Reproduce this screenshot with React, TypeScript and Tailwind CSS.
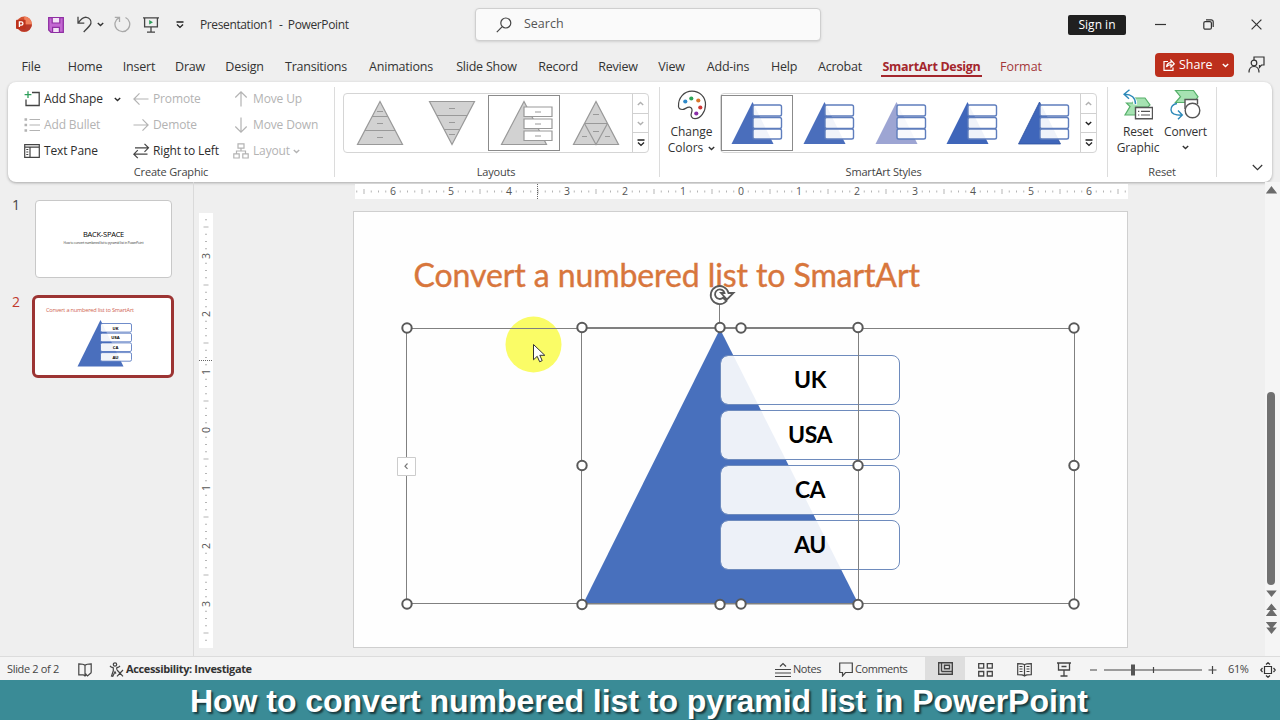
import type { ReactNode } from "react";
import clsx from "clsx";

/* ── Data ── */

const TABS = [
  { label: "File", width: "w-[46px]" },
  { label: "Home", width: "w-[62px]" },
  { label: "Insert", width: "w-[46px]" },
  { label: "Draw", width: "w-[56px]" },
  { label: "Design", width: "w-[53px]" },
  { label: "Transitions", width: "w-[90px]" },
  { label: "Animations", width: "w-[80px]" },
  { label: "Slide Show", width: "w-[91px]" },
  { label: "Record", width: "w-[52px]" },
  { label: "Review", width: "w-[68px]" },
  { label: "View", width: "w-[39px]" },
  { label: "Add-ins", width: "w-[74px]" },
  { label: "Help", width: "w-[38px]" },
  { label: "Acrobat", width: "w-[74px]" },
];

const COUNTRIES = [
  { name: "UK", top: "top-[143px]" },
  { name: "USA", top: "top-[198px]" },
  { name: "CA", top: "top-[253px]" },
  { name: "AU", top: "top-[308px]" },
];

const HANDLES = [
  [407, 328], [741, 328], [1074, 328], [1074, 465.5], [1074, 604], [741, 604], [407, 604],
  [582, 327.5], [720, 327.5], [858, 327.5], [858, 465.5], [858, 604.5], [720, 604.5], [582, 604.5], [582, 465.5],
];

/* ── Icons ── */

function Svg({ w, h, children, className }: { w: number; h: number; children: ReactNode; className?: string }) {
  return (
    <svg
      width={w}
      height={h}
      viewBox={`0 0 ${w} ${h}`}
      fill="none"
      stroke="currentColor"
      strokeWidth="1.2"
      className={clsx("block shrink-0", className)}
    >
      {children}
    </svg>
  );
}

function Chevron({ className }: { className?: string }) {
  return (
    <Svg w={7} h={5} className={className}>
      <path d="M.8 1 3.5 3.6 6.2 1" strokeWidth="1.4" />
    </Svg>
  );
}

function MoreIcon() {
  return (
    <Svg w={8} h={8} className="text-[#222]">
      <path d="M.5 1h7M1 3.6l3 2.8 3-2.8" strokeWidth="1.4" />
    </Svg>
  );
}

function PowerPointLogo() {
  return (
    <Svg w={16} h={17}>
      <circle cx="8.2" cy="8.3" r="7.7" fill="#d35230" stroke="none" />
      <path d="M8.2.6a7.7 7.7 0 0 1 7.7 7.7H8.2z" fill="#f0805c" stroke="none" />
      <path d="M.6 8.8h15.3a7.7 7.7 0 0 1-15.3 0z" fill="#b7382a" stroke="none" />
      <rect x="0" y="3.8" width="9.6" height="9.2" rx="1" fill="#bd321c" stroke="none" />
      <path d="M3.4 11V5.8h1.9a1.6 1.6 0 0 1 0 3.3H3.6" stroke="#fff" strokeWidth="1.3" />
    </Svg>
  );
}

function SaveIcon() {
  return (
    <Svg w={16} h={16}>
      <path d="M.7.7h14.6v14.6H3L.7 13z" fill="#c368d2" stroke="#8f2fa3" strokeWidth="1.3" />
      <path d="M4.2 1v5h7.6V1" fill="#f3e3f6" stroke="#8f2fa3" />
      <path d="M4.6 15v-4.6h6.8V15" fill="#f3e3f6" stroke="#8f2fa3" />
    </Svg>
  );
}

function UndoIcon() {
  return (
    <Svg w={16} h={17} className="text-[#444]">
      <path d="M1 .8v6.400h6.300M1.200 7C4 3 6.500 1 9.300 1.300c3.400.3 5.300 3.500 4.600 6.200-.5 2-3.500 4.800-7.200 8.500" strokeWidth="1.3" />
    </Svg>
  );
}

function RedoIcon() {
  return (
    <Svg w={17} h={17} className="text-[#a9a9a9]">
      <path d="M11.5 1.500A7.400 7.400 0 1 1 5 1.600M.8 1.300h4.700v4.700" strokeWidth="1.3" />
    </Svg>
  );
}

function ShowIcon() {
  return (
    <Svg w={16} h={16} className="text-[#444]">
      <path d="M0 .8h16M1.600 1v8.800h12.800V1M8 9.800v5M4 15.200h8" strokeWidth="1.3" />
      <path d="M6.200 3v4.600L10 5.300z" fill="#2e9e5b" stroke="none" />
    </Svg>
  );
}

function AddShapeIcon() {
  return (
    <Svg w={16} h={16} className="text-[#444]">
      <path d="M8 1.500h7.200v13H2V8.500" strokeWidth="1.3" />
      <path d="M4 .3v6.800M.6 3.700h6.800" stroke="#2e9e5b" strokeWidth="1.3" />
    </Svg>
  );
}

function BulletIcon() {
  return (
    <Svg w={16} h={16}>
      <path d="M5.500 2.500H16M5.500 8H16M5.500 13.500H16" />
      <path d="M.5 2.500h2.600M.5 8h2.600M.5 13.500h2.600" strokeWidth="2.6" />
    </Svg>
  );
}

function TextPaneIcon() {
  return (
    <Svg w={16} h={14} className="text-[#444]">
      <path d="M.7.7h14.600v12.600H.7zM.7 3.200h14.600M6 3.200v10M2.300 5.500h2M2.300 8h2M2.300 10.500h2" />
    </Svg>
  );
}

function ArrowIcon({ direction }: { direction: "left" | "right" | "up" | "down" }) {
  const rotation = { left: "", right: "rotate-180", up: "rotate-90", down: "-rotate-90" }[direction];
  return (
    <Svg w={16} h={14} className={rotation}>
      <path d="M.9 7h14.600M6.500 1.300.9 7l5.600 5.700" />
    </Svg>
  );
}

function SwapIcon() {
  return (
    <Svg w={17} h={16} className="text-[#444]">
      <path d="M2 4.800h13.500M11.500.8l4 4-4 4M14.500 11.200H.8M4.800 7.200l-4 4 4 4" />
    </Svg>
  );
}

function OrgIcon() {
  return (
    <Svg w={16} h={16}>
      <path d="M5 .8h6v4.400H5zM.8 10.800h5.400v4.200H.8zM9.800 10.800h5.400v4.200H9.800zM8 5.200V8M3.500 10.800V8h9v2.800" />
    </Svg>
  );
}

function PaletteIcon() {
  return (
    <Svg w={30} h={30} className="text-[#444]">
      <path
        d="M1.500 16.500C1 8 7 1.200 15 1.200c7.500 0 13.500 5.500 13.500 13.300 0 7.500-5 14.200-10.500 14.200-3.500 0-4.700-3-3.500-6 1.200-3 .4-5.200-1.800-5.500-3-.4-4.600 2.300-7.200 2.300-2.300 0-3.800-1.200-4-3z"
        fill="#fff"
      />
      <circle cx="8.300" cy="11.500" r="2.100" fill="#2f8ac9" stroke="none" />
      <circle cx="14.300" cy="8.500" r="2.100" fill="#2da657" stroke="none" />
      <circle cx="21.300" cy="10.500" r="2.100" fill="#d9772b" stroke="none" />
      <circle cx="23.300" cy="17.500" r="2.100" fill="#cf3636" stroke="none" />
      <circle cx="19.300" cy="23.500" r="2.100" fill="#8a2da8" stroke="none" />
    </Svg>
  );
}

function ResetIcon() {
  return (
    <Svg w={30} h={32} className="text-[#555]">
      <path d="M11 9h11l5 7-2 2H13v8H2l5-8.500L3.500 14H10z" fill="#a6e3b2" stroke="#57b06b" />
      <path d="M10 9c1.500 1.800 2.400 4 2.200 6.500" stroke="#fff" strokeWidth="4" />
      <path d="M12.500 15C12.500 8.500 8.500 5.200 1.500 5.300M6.500.8 1 5.300l5 4.500" stroke="#2b88b8" strokeWidth="1.4" />
      <path d="M12.500 18.500h17v11.300h-17z" fill="#fff" strokeWidth="1.4" />
      <path d="M15 22.300h1.300M15 26h1.300M18 22.300h9M18 26h9" />
    </Svg>
  );
}

function ConvertIcon() {
  return (
    <Svg w={31} h={31} className="text-[#555]">
      <path d="M5.500 1.500h18L28 7.800l-4 5.700H5.500l5-5.800z" fill="#a6e3b2" stroke="#57b06b" />
      <path d="M15 20V10.500h12.500V15" fill="#fff" strokeWidth="1.4" />
      <circle cx="22.500" cy="21.500" r="7.300" fill="#fff" strokeWidth="1.4" />
      <path d="M7 14.500C3 15 .8 18 1 21c.3 3.500 4 5.300 11 5.200M8 21.500l4.300 4.600L8 30.300" stroke="#2b88b8" strokeWidth="1.4" />
    </Svg>
  );
}

/* ── Gallery drawings ── */

function LayoutDrawing({ kind }: { kind: "basic" | "inverted" | "list" | "segmented" }) {
  return (
    <Svg w={50} h={50} className="overflow-visible text-[#999]">
      {kind === "basic" && (
        <path d="M25 3.500 47.500 46.500h-45zM17.500 18.500h15M10 32.500h30M22 13.500h6M22 25.500h6M22 39.500h6" fill="#d2d2d2" />
      )}
      {kind === "inverted" && (
        <path d="M25 46.500 47.500 3.500h-45zM10 17.500h30M17.500 31.500h15M22 10.500h6M22 24.500h6M22 36.500h6" fill="#d2d2d2" />
      )}
      {kind === "list" && (
        <>
          <path d="M25 3.500 47.500 46.500h-45z" fill="#d2d2d2" />
          <path d="M25 9h28v9.500H25zM25 21h28v9.500H25zM25 33h28v9.500H25z" fill="#fff" />
          <path d="M36 14h6M36 26h6M36 38h6" />
        </>
      )}
      {kind === "segmented" && (
        <>
          <path d="M25 3.500 47.500 46.500h-45z" fill="#d2d2d2" />
          <path d="M13.500 25.500h23M13.500 25.500 25 46.500l11.500-21M22 16.500h6M22 33.500h6M11 38.500h5M34 38.500h5" />
        </>
      )}
    </Svg>
  );
}

function StyleDrawing({ fill, dark = false }: { fill: string; dark?: boolean }) {
  return (
    <svg width="54" height="50" viewBox="1.500 0 54 50" className="block">
      <path d="M24 4 45 46H3z" fill={fill} stroke={dark ? "#2c50a0" : "none"} strokeWidth=".8" />
      {[7, 19.5, 31].map((y) => (
        <rect key={y} x="24.500" y={y} width="28.500" height={y === 31 ? 10 : 11} rx="1.800" fill="#fff" fillOpacity=".92" stroke="#5f7ebd" strokeWidth="1.400" />
      ))}
    </svg>
  );
}

function GalleryItem({ selected, children }: { selected?: boolean; children: ReactNode }) {
  return (
    <div className={clsx("mt-px flex h-[56px] w-[72px] items-center justify-center", selected && "border-[1.500px] border-[#8b8b8b]")}>
      {children}
    </div>
  );
}

function GalleryButtons({ canScroll }: { canScroll?: boolean }) {
  return (
    <div className="flex w-[16px] flex-col divide-y divide-[#d0d0d0] border-l border-[#d0d0d0]">
      <div className="flex flex-1 items-center justify-center"><Chevron className="rotate-180 text-[#b0b0b0]" /></div>
      <div className="flex flex-1 items-center justify-center">
        <Chevron className={canScroll ? "text-[#222]" : "text-[#b0b0b0]"} />
      </div>
      <div className="flex flex-1 items-center justify-center"><MoreIcon /></div>
    </div>
  );
}

/* ── Title bar and tabs ── */

function TitleBar() {
  return (
    <header className="flex h-12 items-center pt-px pl-4 text-[#333]">
      <PowerPointLogo />
      <div className="ml-4"><SaveIcon /></div>
      <div className="ml-[13px]"><UndoIcon /></div>
      <Chevron className="ml-[4px]" />
      <div className="ml-[10px]"><RedoIcon /></div>
      <div className="ml-[12px]"><ShowIcon /></div>
      <div className="ml-[17px]"><MoreIcon /></div>
      <span className="ml-4 w-[275px] whitespace-pre text-[12px] tracking-[-0.380px]">Presentation1  -  PowerPoint</span>
      <div className="flex h-[33px] w-[346px] items-center rounded-[4px] border border-[#cfcfcf] bg-[#fafafa] pl-[20px] shadow-sm">
        <Svg w={16} h={16} className="text-[#444]">
          <circle cx="9.800" cy="6" r="5" />
          <path d="M6 9.800.8 15.200" />
        </Svg>
        <span className="ml-[12px] text-[12.500px] text-[#555]">Search</span>
      </div>
      <button className="ml-[247px] h-5 w-[58px] rounded-[2px] bg-[#202020] text-[12px] leading-5 text-white">Sign in</button>
      <Svg w={11} h={11} className="ml-[29px]"><path d="M0 5.500h11" /></Svg>
      <Svg w={11} h={11} className="ml-[37px]">
        <rect x=".8" y="2.600" width="7.600" height="7.600" rx="1.500" />
        <path d="M3 .8h5.200a2 2 0 0 1 2 2V8" />
      </Svg>
      <Svg w={11} h={11} className="ml-[37px]"><path d="m.6.6 9.800 9.800M10.400.6.600 10.400" /></Svg>
    </header>
  );
}

function TabRow() {
  return (
    <nav className="flex h-[34px] items-center text-[12.500px] text-[#333]">
      <div className="flex h-full flex-1 items-center pt-[4px]">
        <div className="flex pl-2">
          {TABS.map((tab) => (
            <span key={tab.label} className={clsx("text-center tracking-[-0.220px] whitespace-nowrap", tab.width)}>{tab.label}</span>
          ))}
        </div>
        <span className="mt-[2px] ml-[4px] w-[101px] border-b-2 border-[#a4262c] text-center leading-4 font-bold tracking-[-0.320px] whitespace-nowrap text-[#a4262c]">
          SmartArt Design
        </span>
        <span className="ml-[18px] text-[#a4373a]">Format</span>
      </div>
      <div className="flex h-6 w-[79px] items-center rounded-[4px] bg-[#bc2f1c] pl-[8px] text-white">
        <Svg w={12} h={12}>
          <path d="M5 2.500H1v8.800h9V8.500M3.500 8c.3-3 2-4.300 4.500-4.300V1.300l3.300 3.500L8 8V5.700C6 5.700 4.500 6.300 3.500 8z" />
        </Svg>
        <span className="ml-1 w-[42px] text-[12.500px]">Share</span>
        <Chevron className="ml-px" />
      </div>
      <Svg w={17} h={18} className="mr-[15px] ml-[14px]">
        <path d="M6 4V1h10v8h-2.500l-2 2.300V9" />
        <circle cx="6" cy="7" r="2.800" />
        <path d="M1 16.500c0-4 2-6 5-6s5 2 5 6" />
      </Svg>
    </nav>
  );
}

/* ── Ribbon ── */

function Command({ icon, label, muted, chevron }: { icon: ReactNode; label: string; muted?: boolean; chevron?: ReactNode }) {
  return (
    <div className={clsx("flex h-[26px] items-center whitespace-nowrap", muted ? "text-[#b3b3b3]" : "text-[#2d2d2d]")}>
      <div className="flex w-[20px] items-center">{icon}</div>
      <span className="tracking-[-0.140px]">{label}</span>
      {chevron}
    </div>
  );
}

function GroupLabel({ children }: { children: ReactNode }) {
  return <div className="text-center text-[11px] leading-[17px] tracking-[-0.180px] text-[#444]">{children}</div>;
}

function Ribbon() {
  return (
    <section className="mx-2 flex h-[100px] rounded-[8px] bg-white text-[12px] shadow-[0_1px_3px_rgba(0,0,0,0.3)]">
      <div className="my-[5px] w-[327px] border-r border-[#dcdcdc]">
        <div className="flex h-[76px] pl-4">
          <div className="-mt-px w-[109px]">
            <Command icon={<AddShapeIcon />} label="Add Shape" chevron={<Chevron className="mr-[12px] ml-auto" />} />
            <Command icon={<BulletIcon />} label="Add Bullet" muted />
            <Command icon={<TextPaneIcon />} label="Text Pane" />
          </div>
          <div className="-mt-px w-[100px]">
            <Command icon={<ArrowIcon direction="left" />} label="Promote" muted />
            <Command icon={<ArrowIcon direction="right" />} label="Demote" muted />
            <Command icon={<SwapIcon />} label="Right to Left" />
          </div>
          <div className="-mt-px">
            <Command icon={<ArrowIcon direction="up" />} label="Move Up" muted />
            <Command icon={<ArrowIcon direction="down" />} label="Move Down" muted />
            <Command icon={<OrgIcon />} label="Layout" muted chevron={<Chevron className="ml-[3px]" />} />
          </div>
        </div>
        <GroupLabel>Create Graphic</GroupLabel>
      </div>

      <div className="my-[5px] w-[325px] border-r border-[#dcdcdc] pl-2">
        <div className="h-[76px] pt-[6px]">
          <div className="flex h-[60px] w-[306px] rounded-[4px] border border-[#d5d5d5]">
            <GalleryItem><LayoutDrawing kind="basic" /></GalleryItem>
            <GalleryItem><LayoutDrawing kind="inverted" /></GalleryItem>
            <GalleryItem selected><LayoutDrawing kind="list" /></GalleryItem>
            <GalleryItem><LayoutDrawing kind="segmented" /></GalleryItem>
            <GalleryButtons />
          </div>
        </div>
        <div className="w-[306px]"><GroupLabel>Layouts</GroupLabel></div>
      </div>

      <div className="my-[5px] w-[448px] border-r border-[#dcdcdc]">
        <div className="flex h-[76px]">
          <div className="flex w-[60px] flex-col items-center pt-[3px] pl-[3px] text-[#333]">
            <PaletteIcon />
            <span className="mt-[4px] leading-4">Change</span>
            <span className="flex items-center gap-[5px] leading-4">Colors <Chevron /></span>
          </div>
          <div className="pt-[6px]">
            <div className="flex h-[60px] w-[377px] rounded-[4px] border border-[#d5d5d5]">
              <GalleryItem selected><StyleDrawing fill="#4a6ebc" /></GalleryItem>
              <GalleryItem><StyleDrawing fill="#4a6ebc" /></GalleryItem>
              <GalleryItem><StyleDrawing fill="#9da5d3" /></GalleryItem>
              <GalleryItem><StyleDrawing fill="#3f66ba" /></GalleryItem>
              <GalleryItem><StyleDrawing fill="#3f66ba" dark /></GalleryItem>
              <GalleryButtons canScroll />
            </div>
          </div>
        </div>
        <GroupLabel>SmartArt Styles</GroupLabel>
      </div>

      <div className="my-[5px] w-[109px] border-r border-[#dcdcdc]">
        <div className="flex h-[76px] pl-[6px] tracking-[-0.150px] text-[#333]">
          <div className="flex w-[48px] flex-col items-center pt-[2px]">
            <ResetIcon />
            <span className="mt-[3px] leading-4">Reset</span>
            <span className="leading-4">Graphic</span>
          </div>
          <div className="flex w-[47px] flex-col items-center pt-[2px]">
            <ConvertIcon />
            <span className="mt-1 leading-4">Convert</span>
            <Chevron className="mt-[5px]" />
          </div>
        </div>
        <GroupLabel>Reset</GroupLabel>
      </div>

      <div className="flex flex-1 items-end justify-end pr-[9px] pb-[11px] text-[#333]">
        <Svg w={11} h={7}><path d="m.8 1 4.700 4.600L10.200 1" /></Svg>
      </div>
    </section>
  );
}

/* ── Slide thumbnails ── */

function ThumbnailPane() {
  return (
    <aside className="w-[194px] border-r border-[#dadada] pt-[18px]">
      <div className="flex">
        <span className="-mt-[3px] w-[35px] pl-[12px] text-[14px] leading-4 text-[#444]">1</span>
        <div className="flex h-[78px] w-[137px] flex-col items-center rounded-[4px] border border-[#c8c8c8] bg-white pt-[27px] text-black">
          <span className="text-[7.500px] leading-[12px] tracking-[-0.250px]">BACK-SPACE</span>
          <span className="mt-px text-[3.200px] leading-[5px] tracking-[-0.140px] whitespace-nowrap text-[#333]">
            How to convert numbered list to pyramid list in PowerPoint
          </span>
        </div>
      </div>
      <div className="mt-[17px] flex">
        <span className="-mt-px w-[32px] pl-[12px] text-[14px] leading-4 text-[#c0392b]">2</span>
        <div className="h-[83px] w-[142px] rounded-[6px] border-[3px] border-[#9c3433] bg-white">
          <svg width="136" height="77" viewBox="35 298 136 77" className="block" fontFamily="Open Sans, sans-serif">
            <text x="46" y="311.500" fontSize="5.600" textLength="88" fill="#cf6452">Convert a numbered list to SmartArt</text>
            <path d="m100.500 320 23 46.500h-46z" fill="#4a6fbd" />
            {["UK", "USA", "CA", "AU"].map((name, i) => (
              <g key={name}>
                <rect x="100.500" y={323.500 + i * 9.700} width="31" height="8.600" rx="1.500" fill="#fff" fillOpacity=".92" stroke="#4a6fbd" strokeWidth=".8" />
                <text x="115.500" y={329.500 + i * 9.700} fontSize="4.200" fontWeight="bold" textAnchor="middle">{name}</text>
              </g>
            ))}
          </svg>
        </div>
      </div>
    </aside>
  );
}

/* ── Rulers ── */

// One inch on the slide is 58px on screen, with a mark at every eighth.
function ticksFor(limit: number) {
  const ticks: { at: number; half: boolean }[] = [];
  for (let i = -limit; i <= limit; i++) {
    if (i % 8 !== 0) ticks.push({ at: i * 7.25, half: i % 4 === 0 });
  }
  return ticks;
}

function HorizontalRuler() {
  return (
    <svg width="773" height="15" viewBox="-386 0 773 15" className="block bg-white" fontFamily="Open Sans, sans-serif">
      {ticksFor(53).map(({ at, half }) => (
        <path key={at} d={half ? `M${at} 5v5` : `M${at} 6.500v2`} stroke="#b5b5b5" />
      ))}
      {[-6, -5, -4, -3, -2, -1, 0, 1, 2, 3, 4, 5, 6].map((n) => (
        <text key={n} x={n * 58} y="11" fontSize="10.500" fill="#555" textAnchor="middle">{Math.abs(n)}</text>
      ))}
      <path d="M-203.500 0v15" stroke="#666" strokeDasharray="1 1" />
    </svg>
  );
}

function VerticalRuler() {
  return (
    <svg width="14" height="435" viewBox="0 -217 14 435" className="block bg-white" fontFamily="Open Sans, sans-serif">
      {ticksFor(29).map(({ at, half }) => (
        <path key={at} d={half ? `M4.500 ${at}h5` : `M6 ${at}h2`} stroke="#b5b5b5" />
      ))}
      {[-3, -2, -1, 0, 1, 2, 3].map((n) => (
        <text key={n} transform={`translate(10.500 ${n * 58}) rotate(-90)`} fontSize="10.500" fill="#555" textAnchor="middle">{Math.abs(n)}</text>
      ))}
      <path d="M0-69.500h14" stroke="#666" strokeDasharray="1 1" />
    </svg>
  );
}

/* ── Slide ── */

function Slide() {
  return (
    <div className="relative h-[437px] w-[775px] border border-[#cfcfcf] bg-[#fefefe]">
      <h1 className="pt-[43px] pl-[59.500px] font-[Lato] text-[32px] leading-10 tracking-[-0.090px] whitespace-nowrap text-[#d8763c] [-webkit-text-stroke:0.4px_#d8763c]">
        Convert a numbered list to SmartArt
      </h1>

      <svg width="773" height="435" viewBox="354 212 773 435" className="absolute inset-0">
        <circle cx="533.500" cy="344.500" r="28" fill="#fafc66" />
        <path d="m720 329 138.500 275H583z" fill="#4870bd" />
      </svg>

      {COUNTRIES.map(({ name, top }) => (
        <div
          key={name}
          className={clsx(
            "absolute left-[366px] flex h-[50px] w-[180px] items-center justify-center rounded-[8px] border border-[#6e8bbd] bg-white/90 bg-clip-padding pb-[2px] font-[Lato] text-[23px] font-bold tracking-[-0.500px] text-black",
            top,
          )}
        >
          {name}
        </div>
      ))}

      <svg width="773" height="435" viewBox="354 212 773 435" className="absolute inset-0" fill="none" stroke="#808080">
        <path d="M407 328.500h667.500v275H406.500v-275M581.500 327.500h277v276.500h-277zM719.500 327v-24" />
        {HANDLES.map(([x, y]) => (
          <circle key={`${x}-${y}`} cx={x} cy={y} r="4.700" fill="#fff" stroke="#595959" strokeWidth="2" />
        ))}
        {/* rotate handle */}
        <path d="M726.500 301a9 9 0 1 1 2-8h5l-6.500 6.500-6-6.500h3.500a4.800 4.800 0 1 0-1.500 4.800z" fill="#fff" stroke="#595959" strokeWidth="1.800" />
        {/* text pane toggle */}
        <path d="M397.500 457.500h18v18h-18z" fill="#fff" stroke="#ccc" />
        <path d="m407.500 463.500-2.500 2.700 2.500 2.700" stroke="#777" strokeWidth="1.200" />
        {/* pointer */}
        <path d="M533.500 344.500v15.300l3.700-3.500 2.500 5.500 2.500-1.200-2.400-5.300h5z" fill="#fff" stroke="#333" />
      </svg>
    </div>
  );
}

function ScrollBar() {
  return (
    <div className="flex w-[15px] flex-col items-center bg-[#f5f5f5] pt-[4px] pr-[3px]">
      <Svg w={11} h={8} className="text-[#6b6b6b]"><path d="M5.500 1 10 7H1z" fill="currentColor" /></Svg>
      <div className="mt-[198px] h-[193px] w-[8px] rounded-full bg-[#707070]" />
      <Svg w={11} h={46} className="mt-[3px] text-[#6b6b6b]">
        <path d="M1.500 3h8l-4 5z" fill="currentColor" />
        <path d="m5.500 16.500 4 5h-8zM5.500 21.500l4.500 6H1zM1 34.500h9l-4.500 5.500zM1.500 40h8l-4 5z" fill="currentColor" />
      </Svg>
    </div>
  );
}

/* ── Status bar ── */

function StatusBar() {
  return (
    <footer className="flex h-6 items-center border-t border-[#dcdcdc] bg-[#f4f4f4] pt-[2px] pl-[7px] text-[11px] text-[#444]">
      <span className="w-[71px] tracking-[-0.340px]">Slide 2 of 2</span>
      <Svg w={14} h={14}>
        <path d="M7 2.200C5.500.8 3 .8.800.8v11h4.500L7 13l1.500-1.200M7 2.200V13M7 2.200C8.500.8 11 .8 13.200.8V9.500M7.500 10.500l2 2.500L13.400 9.500" />
      </Svg>
      <Svg w={15} h={15} className="ml-[17px]">
        <circle cx="6" cy="2.500" r="1.700" />
        <path d="M1 3.800c1 1.400 2.500 1.700 3.300 2v3L2.500 14l1.300.3 2.200-4.500 1 1.800M11 3.800c-1 1.400-2.500 1.700-3.300 2v2M8 8l6 6.300M14 8l-6 6.300" />
      </Svg>
      <span className="ml-[2px] w-[649px] font-bold tracking-[-0.360px] text-[#333]">Accessibility: Investigate</span>
      <Svg w={16} h={16}><path d="M5 4.500 8 1.500l3 3M0 7.500h16M0 11h16M0 14.500h16" /></Svg>
      <span className="ml-[2px] w-[46px] tracking-[-0.450px]">Notes</span>
      <Svg w={14} h={15}><path d="M.7 1h12.600v9.500H6.500L3.500 14v-3.500H.7z" /></Svg>
      <span className="ml-[2px] w-[70px] tracking-[-0.450px]">Comments</span>
      <div className="-mt-[2px] flex h-[23px] w-10 items-center justify-center bg-[#dedede]">
        <Svg w={15} h={13}><path d="M.7.7h13.600v11.600H.7zM3.500.7v8.800M3.500 9.500h11M6.500 3.200h5v3.500h-5z" strokeWidth="1.400" /></Svg>
      </div>
      <Svg w={15} h={14} className="ml-[13px]">
        <path d="M.7.7h5v4.500h-5zM9.300.7h5v4.500h-5zM.7 8.500h5V13h-5zM9.300 8.500h5V13h-5z" strokeWidth="1.300" />
      </Svg>
      <Svg w={15} h={14} className="ml-[24px]">
        <path d="M7.500 1.800C6 .7 3 .7.700.7v11c2.500 0 5.300 0 6.800 1.300 1.500-1.300 4.300-1.300 6.800-1.300v-11c-2.300 0-5.300 0-6.800 1.100V13M2.500 3.500h3M2.500 6h3M2.500 8.500h3M9.500 3.500h3M9.500 6h3M9.500 8.500h3" />
      </Svg>
      <Svg w={14} h={15} className="ml-[25px]">
        <path d="M0 1h14M1.500 1v7h11V1M4.500 4.500h5M7 8v5.500M3.500 14h7" strokeWidth="1.300" />
      </Svg>
      <Svg w={128} h={14} className="ml-[18px]">
        <path d="M1 7h7M15 7h98M64.500 4v6M119.500 7h8M123.500 3v8" strokeWidth="1.200" />
        <rect x="42" y="1.500" width="4" height="11" fill="#555" stroke="none" />
      </Svg>
      <span className="ml-[11px] w-[33px] tracking-[-0.400px]">61%</span>
      <Svg w={16} h={16} className="-ml-px text-[#333]">
        <path d="M4.500 4.500h7v7h-7zM6 2.500 8 .7l2 1.800M6 13.500l2 1.800 2-1.800M2.500 6 .7 8l1.800 2M13.500 6l1.800 2-1.800 2" />
      </Svg>
    </footer>
  );
}

export default function App() {
  return (
    <div className="flex h-[720px] w-[1280px] flex-col overflow-hidden bg-[#efefef] font-['Open_Sans',sans-serif]">
      <TitleBar />
      <TabRow />
      <Ribbon />
      <main className="flex h-[474px]">
        <ThumbnailPane />
        <div className="flex flex-1 pl-[5px]">
          <div className="pt-[31px]"><VerticalRuler /></div>
          <div className="ml-[140px] pt-[2px]">
            <div className="pl-[2px]"><HorizontalRuler /></div>
            <div className="mt-[12px]"><Slide /></div>
          </div>
        </div>
        <ScrollBar />
      </main>
      <StatusBar />
      <div className="flex h-10 items-center bg-[#3a8b96] pt-px pl-[190px] font-['Liberation_Sans',sans-serif] text-[32px] font-bold tracking-[-0.030px] whitespace-nowrap text-white [text-shadow:2px_2px_2px_rgba(0,0,0,0.6)]">
        How to convert numbered list to pyramid list in PowerPoint
      </div>
    </div>
  );
}
